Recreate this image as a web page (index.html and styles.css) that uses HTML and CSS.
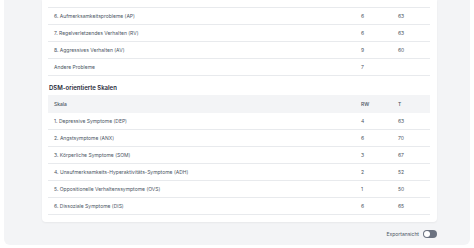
FILE: index.html
```html
<!DOCTYPE html>
<html lang="de">
<head>
<meta charset="utf-8">
<title>Auswertung</title>
<link rel="stylesheet" href="styles.css">
</head>
<body>
<div class="panel">
  <section class="card">
    <table class="scores scores-top">
      <colgroup><col class="c-name"><col class="c-rw"><col class="c-t"></colgroup>
      <tbody>
        <tr><td>6. Aufmerksamkeitsprobleme (AP)</td><td>6</td><td>63</td></tr>
        <tr><td>7. Regelverletzendes Verhalten (RV)</td><td>6</td><td>63</td></tr>
        <tr><td>8. Aggressives Verhalten (AV)</td><td>9</td><td>60</td></tr>
        <tr><td>Andere Probleme</td><td>7</td><td></td></tr>
      </tbody>
    </table>
    <h2 class="section-title">DSM-orientierte Skalen</h2>
    <table class="scores">
      <colgroup><col class="c-name"><col class="c-rw"><col class="c-t"></colgroup>
      <thead>
        <tr><th>Skala</th><th>RW</th><th>T</th></tr>
      </thead>
      <tbody>
        <tr><td>1. Depressive Symptome (DEP)</td><td>4</td><td>63</td></tr>
        <tr><td>2. Angstsymptome (ANX)</td><td>6</td><td>70</td></tr>
        <tr><td>3. Körperliche Symptome (SOM)</td><td>3</td><td>67</td></tr>
        <tr><td>4. Unaufmerksamkeits-Hyperaktivitäts-Symptome (ADH)</td><td>2</td><td>52</td></tr>
        <tr><td>5. Oppositionelle Verhaltenssymptome (OVS)</td><td>1</td><td>50</td></tr>
        <tr><td>6. Dissoziale Symptome (DIS)</td><td>6</td><td>65</td></tr>
      </tbody>
    </table>
  </section>
  <div class="footer">
    <span class="footer-label">Exportansicht</span>
    <span class="toggle" role="switch" aria-checked="false"><span class="knob"></span></span>
  </div>
</div>
</body>
</html>
```
FILE: styles.css
```css
html, body {
  margin: 0;
  padding: 0;
  background: #ffffff;
}

body {
  font-family: Inter, "Liberation Sans", sans-serif;
  color: #4b5563;
}

.panel {
  margin: 0 4px 3px 4px;
  height: 245px;
  box-sizing: border-box;
  background: #f3f4f6;
  border-radius: 0 0 6px 6px;
  padding: 0 33px 0 38px;
  display: flex;
  flex-direction: column;
}

.card {
  background: #ffffff;
  border-radius: 0 0 4px 4px;
  box-shadow: 0 1px 2px rgba(0, 0, 0, 0.05);
  padding: 7px 7px 7px 6px;
}

.scores {
  width: 100%;
  table-layout: fixed;
  border-collapse: separate;
  border-spacing: 0;
  font-size: 5px;
}

.c-rw { width: 37px; }
.c-t { width: 38px; }

.scores td,
.scores th {
  height: 16px;
  padding: 0 6px;
  line-height: 16px;
  text-align: left;
  vertical-align: middle;
  white-space: nowrap;
  border-bottom: 1px solid #e8eaed;
}

.scores-top tr:first-child td {
  border-top: 1px solid #e8eaed;
  height: 15px;
}

.scores th {
  height: 18px;
  font-weight: 500;
  background: #f3f4f6;
  border-bottom: none;
  color: #4b5563;
}

.section-title {
  margin: 7px 0 3px 1px;
  font-size: 6px;
  line-height: 9px;
  font-weight: 600;
  color: #1f2937;
}

.footer {
  margin-top: 7px;
  height: 9px;
  display: flex;
  justify-content: flex-end;
  align-items: center;
  gap: 4px;
}

.footer-label {
  font-size: 5px;
  color: #4b5563;
}

.toggle {
  width: 14px;
  height: 8px;
  border-radius: 4px;
  background: #6b7280;
  display: flex;
  align-items: center;
  padding: 0 1px;
  box-sizing: border-box;
}

.knob {
  width: 6px;
  height: 6px;
  border-radius: 50%;
  background: #ffffff;
}
```
